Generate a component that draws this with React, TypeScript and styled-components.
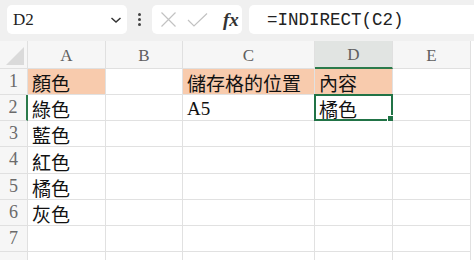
import { createGlobalStyle, styled } from "styled-components";

const GlobalStyle = createGlobalStyle`
  html, body {
    margin: 0;
    padding: 0;
    background: #ffffff;
  }
  body {
    width: 474px;
    height: 260px;
    overflow: hidden;
    font-family: "Liberation Serif", "Noto Sans CJK TC", serif;
  }
`;

const columns = ["A", "B", "C", "D", "E"];
const colWidths = [78, 77, 132, 78, 78];

type Fill = "peach" | undefined;

const rows: { text: string; fill?: Fill }[][] = [
  [
    { text: "顏色", fill: "peach" },
    { text: "" },
    { text: "儲存格的位置", fill: "peach" },
    { text: "內容", fill: "peach" },
    { text: "" },
  ],
  [{ text: "綠色" }, { text: "" }, { text: "A5" }, { text: "橘色" }, { text: "" }],
  [{ text: "藍色" }, { text: "" }, { text: "" }, { text: "" }, { text: "" }],
  [{ text: "紅色" }, { text: "" }, { text: "" }, { text: "" }, { text: "" }],
  [{ text: "橘色" }, { text: "" }, { text: "" }, { text: "" }, { text: "" }],
  [{ text: "灰色" }, { text: "" }, { text: "" }, { text: "" }, { text: "" }],
  [{ text: "" }, { text: "" }, { text: "" }, { text: "" }, { text: "" }],
  [{ text: "" }, { text: "" }, { text: "" }, { text: "" }, { text: "" }],
];

const activeCol = 3;
const activeRow = 1;

export default function App() {
  return (
    <>
      <GlobalStyle />
      <Page>
        <Toolbar>
          <NameBox>
            <NameText>D2</NameText>
            <svg width="12" height="8" viewBox="0 0 12 8">
              <path d="M1.5 2 L6 6 L10.5 2" fill="none" stroke="#333" strokeWidth="1.5" />
            </svg>
          </NameBox>
          <Dots>
            <span />
            <span />
            <span />
          </Dots>
          <FxBox>
            <svg width="17" height="17" viewBox="0 0 17 17">
              <path d="M1.5 1.5 L15.5 15.5 M15.5 1.5 L1.5 15.5" stroke="#c2c2c2" strokeWidth="1.2" fill="none" />
            </svg>
            <svg width="21" height="16" viewBox="0 0 21 16">
              <path d="M1 8 L7 14 L20 1.5" stroke="#c2c2c2" strokeWidth="1.2" fill="none" />
            </svg>
            <FxLabel>fx</FxLabel>
          </FxBox>
          <FormulaBox>=INDIRECT(C2)</FormulaBox>
        </Toolbar>

        <Grid>
          <Corner>
            <CornerTriangle />
          </Corner>
          {columns.map((c, i) => (
            <ColHeader key={c} $active={i === activeCol}>
              {c}
            </ColHeader>
          ))}
          {rows.map((row, r) => (
            <RowFragment key={r} index={r} cells={row} />
          ))}
        </Grid>
      </Page>
    </>
  );
}

// the 8th row is cut by the window edge, so its number isn't shown
const RowFragment = ({ index, cells }: { index: number; cells: { text: string; fill?: Fill }[] }) => (
  <>
    <RowHeader $active={index === activeRow}>{index < 7 ? index + 1 : ""}</RowHeader>
    {cells.map((cell, c) => (
      <Cell key={c} $fill={cell.fill}>
        {cell.text}
        {index === activeRow && c === activeCol && (
          <Selection>
            <Handle />
          </Selection>
        )}
      </Cell>
    ))}
  </>
);

const Page = styled.div`
  width: 474px;
  height: 260px;
  overflow: hidden;
  display: flex;
  flex-direction: column;
`;

const Toolbar = styled.div`
  flex-shrink: 0;
  display: flex;
  align-items: center;
  height: 41px;
  padding: 0 0 2px 7px;
  box-sizing: border-box;
  background: #f0f0f0;
`;

const NameBox = styled.div`
  width: 120px;
  height: 29px;
  box-sizing: border-box;
  background: #ffffff;
  border-radius: 5px;
  display: flex;
  align-items: center;
  justify-content: space-between;
  padding: 0 5px 0 6px;
`;

const NameText = styled.span`
  font-family: "Liberation Serif", serif;
  font-size: 17px;
  color: #222;
`;

const Dots = styled.div`
  width: 25px;
  display: flex;
  flex-direction: column;
  align-items: center;
  gap: 2px;

  span {
    width: 3px;
    height: 3px;
    border-radius: 50%;
    background: #444;
  }
`;

const FxBox = styled.div`
  width: 90px;
  height: 29px;
  box-sizing: border-box;
  background: #ffffff;
  border-radius: 5px;
  display: flex;
  align-items: center;
  gap: 10px;
  padding: 0 0 0 8px;
  margin-right: 7px;
`;

const FxLabel = styled.span`
  font-family: "Liberation Serif", serif;
  font-style: italic;
  font-weight: bold;
  font-size: 19px;
  color: #333;
  margin-left: 5px;
`;

const FormulaBox = styled.div`
  flex: 1;
  height: 29px;
  background: #ffffff;
  border-radius: 5px 0 0 5px;
  display: flex;
  align-items: center;
  padding-left: 18px;
  font-family: "Liberation Mono", monospace;
  font-size: 17.5px;
  color: #222;
`;

const Grid = styled.div`
  flex-shrink: 0;
  display: grid;
  grid-template-columns: 28px ${colWidths.map((w) => `${w}px`).join(" ")};
  grid-template-rows: 28px repeat(8, 26.15px);
`;

const Corner = styled.div`
  position: relative;
  background: #f6f6f6;
  border-right: 1px solid #e0e0e0;
  border-bottom: 1px solid #e0e0e0;
`;

const CornerTriangle = styled.div`
  position: absolute;
  right: 3px;
  bottom: 3px;
  width: 18px;
  height: 18px;
  background: #dadada;
  clip-path: polygon(100% 0, 100% 100%, 0 100%);
`;

const ColHeader = styled.div<{ $active: boolean }>`
  display: flex;
  align-items: center;
  justify-content: center;
  box-sizing: border-box;
  background: ${({ $active }) => ($active ? "#e1e4e2" : "#f6f6f6")};
  border-right: 1px solid #e0e0e0;
  border-bottom: ${({ $active }) => ($active ? "2px solid #2b7a4b" : "1px solid #e0e0e0")};
  font-size: 17px;
  color: #5f5f5f;
  padding-top: 2px;
`;

const RowHeader = styled.div<{ $active: boolean }>`
  display: flex;
  align-items: center;
  justify-content: center;
  box-sizing: border-box;
  background: #f6f6f6;
  border-right: ${({ $active }) => ($active ? "2px solid #2b7a4b" : "1px solid #e0e0e0")};
  border-bottom: 1px solid #e0e0e0;
  font-size: 18px;
  color: #6a6a6a;
`;

const Cell = styled.div<{ $fill?: Fill }>`
  position: relative;
  display: flex;
  align-items: center;
  box-sizing: border-box;
  padding: 2px 0 0 4px;
  background: ${({ $fill }) => ($fill === "peach" ? "#f8cbad" : "#ffffff")};
  border-right: 1px solid #e1e1e1;
  border-bottom: 1px solid #e1e1e1;
  font-family: "Liberation Serif", "Noto Sans CJK TC", serif;
  font-size: 19px;
  color: #111;
  white-space: nowrap;
`;

const Selection = styled.div`
  position: absolute;
  left: -1px;
  top: -1px;
  right: -1px;
  bottom: -1px;
  border: 2px solid #217346;
  pointer-events: none;
`;

const Handle = styled.div`
  position: absolute;
  right: -4px;
  bottom: -4px;
  width: 6px;
  height: 6px;
  background: #217346;
  border: 1px solid #ffffff;
`;
